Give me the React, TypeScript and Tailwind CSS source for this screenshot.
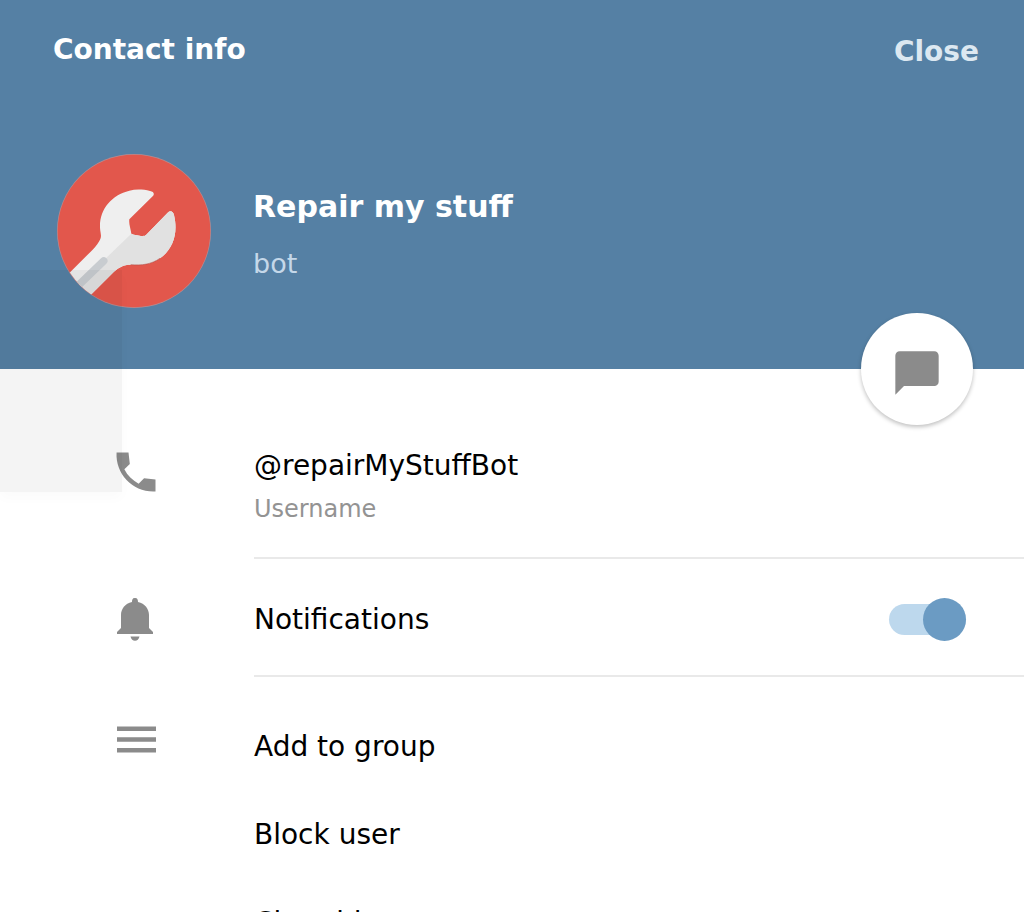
import { useState } from "react";

function Avatar() {
  return (
    <svg viewBox="51 43 462 462" className="size-[154px] shrink-0" role="img" aria-label="Wrench">
      <defs>
        <clipPath id="disc">
          <circle cx="282" cy="274" r="229" />
        </clipPath>
      </defs>
      <circle cx="282" cy="274" r="231" fill="#b98b90" />
      <g clipPath="url(#disc)">
        <rect x="51" y="43" width="462" height="462" fill="#e2574c" />
        <path
          d="M338 170C345 162 341 156 330 154C310 149 288 148 268 153C215 166 178 208 180 264C181 282 187 290 178 304C170 318 161 327 152 336L70 418L140 478L222 396C237 383 250 375 272 375C306 378 334 374 360 356C400 328 415 280 402 226C399 214 391 212 383 219L318 286C311 292 300 289 291 287C284 286 279 284 274 282C272 267 266 253 268 239Z"
          fill="#efefef"
        />
        <path
          d="M274 282C279 284 284 286 291 287C300 289 311 292 318 286L383 219C391 212 399 214 402 226C415 280 400 328 360 356C334 374 306 378 272 375C250 375 237 383 222 396L140 478L100 450Z"
          fill="#e1e1e1"
        />
        <path d="M191 364L110 442" stroke="#c8ccd0" strokeWidth="23" strokeLinecap="round" />
        <path d="M272 375C306 378 334 374 360 356" stroke="#b75049" strokeWidth="2" fill="none" />
      </g>
    </svg>
  );
}

function PhoneIcon() {
  return (
    <svg viewBox="0 0 24 24" className="size-[52px] fill-[#8b8b8b]" aria-hidden="true">
      <path d="M21 15.460l-5.270-.610-2.520 2.520c-2.830-1.440-5.150-3.750-6.590-6.590l2.530-2.530L8.540 3H3.030C2.450 13.180 10.820 21.550 21 20.970v-5.510z" />
    </svg>
  );
}

function BellIcon() {
  return (
    <svg viewBox="0 0 52 52" className="size-[52px] fill-[#8b8b8b]" aria-hidden="true">
      <path d="M22 7C22 3.500 23.500 3 25 3S28 3.500 28 7C35 8.500 39 14 39 20V33L43 37V39H7V37L11 33V20C11 14 15 8.500 22 7Z" />
      <path d="M20.500 41.500H29.500C28.500 47.200 21.500 47.200 20.500 41.500Z" />
    </svg>
  );
}

function MenuIcon() {
  return (
    <svg viewBox="0 0 52 52" className="size-[52px] fill-[#8b8b8b]" aria-hidden="true">
      <path d="M7 13.500H46V18H7ZM7 24.200H46V28.700H7ZM7 35H46V39.500H7Z" />
    </svg>
  );
}

function ChatIcon() {
  return (
    <svg viewBox="0 0 24 24" className="size-[52px] fill-[#8b8b8b]" aria-hidden="true">
      <path d="M20 2H4c-1.100 0-2 .9-2 2v18l4-4h14c1.100 0 2-.9 2-2V4c0-1.100-.9-2-2-2z" />
    </svg>
  );
}

const actions = ["Add to group", "Block user", "Clear history"];

export default function App() {
  const [notify, setNotify] = useState(true);

  return (
    <div className="relative h-screen overflow-hidden bg-white font-['DejaVu_Sans',sans-serif] text-[28px] leading-8 text-black">
      <header className="relative bg-[#5580a4] pb-[61px] text-white">
        <div className="flex items-end justify-between pt-[34px] pr-[45px] pl-[53px]">
          <h1 className="pb-[2px] font-bold">Contact info</h1>
          <button type="button" className="cursor-pointer font-bold text-[#dce8f1]">
            Close
          </button>
        </div>
        <div className="flex gap-[42px] pt-[86px] pl-[57px]">
          <Avatar />
          <div className="flex flex-col gap-[25px] pt-[37px]">
            <h2 className="text-[30px] leading-8 font-bold">Repair my stuff</h2>
            <p className="text-[27px] leading-8 text-[#c5d8e9]">bot</p>
          </div>
        </div>
        <button
          type="button"
          aria-label="Send message"
          className="absolute right-[51px] -bottom-14 flex size-28 cursor-pointer items-center justify-center rounded-full bg-white pt-2 shadow-[0_2px_4px_rgba(0,0,0,0.25)]"
        >
          <ChatIcon />
        </button>
      </header>

      <main>
        <section className="flex">
          <div className="w-[254px] shrink-0 pt-[77px] pl-[110px]">
            <PhoneIcon />
          </div>
          <div className="flex-1 border-b-2 border-[#e9e9e9] pt-[81px] pb-8">
            <p>@repairMyStuffBot</p>
            <p className="mt-[11px] text-[24px] leading-8 text-[#939393]">Username</p>
          </div>
        </section>

        <section className="flex">
          <div className="w-[254px] shrink-0 pt-9 pb-[30px] pl-[110px]">
            <BellIcon />
          </div>
          <label className="flex flex-1 cursor-pointer items-center justify-between border-b-2 border-[#e9e9e9] pt-[5px] pr-[58px]">
            <span>Notifications</span>
            <input
              type="checkbox"
              checked={notify}
              onChange={(e) => setNotify(e.target.checked)}
              className="peer sr-only"
            />
            <span className="flex h-[31px] w-[77px] items-center rounded-full bg-[#bdd8ed] peer-checked:justify-end">
              <span className="size-[43px] shrink-0 rounded-full bg-[#6b9bc3]" />
            </span>
          </label>
        </section>

        <section className="flex">
          <div className="w-[254px] shrink-0 pt-9 pl-[110px]">
            <MenuIcon />
          </div>
          <div className="flex flex-1 flex-col items-start gap-14 pt-[54px]">
            {actions.map((action) => (
              <button key={action} type="button" className="cursor-pointer">
                {action}
              </button>
            ))}
          </div>
        </section>
      </main>

      <div
        aria-hidden="true"
        className="pointer-events-none absolute top-[270px] left-0 h-[222px] w-[122px] bg-black/[0.045] shadow-[0_6px_12px_rgba(0,0,0,0.02)]"
      />
    </div>
  );
}
